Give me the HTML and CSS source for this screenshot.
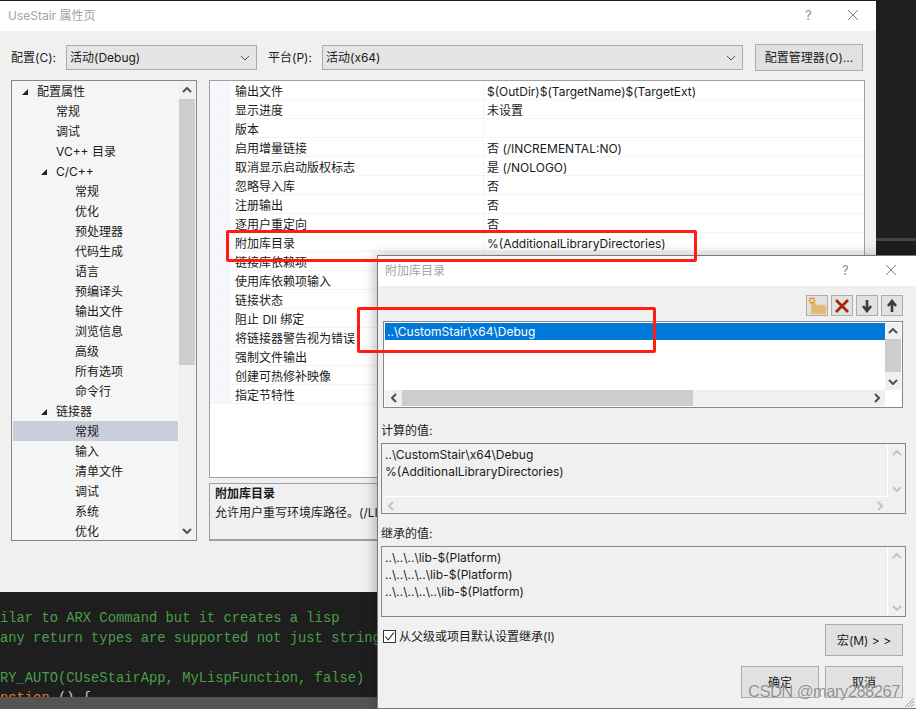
FILE: index.html
```html
<!DOCTYPE html>
<html lang="zh-CN">
<head>
<meta charset="utf-8">
<title>UseStair 属性页</title>
<link rel="stylesheet" href="styles.css">
</head>
<body>
<svg class="defs" aria-hidden="true">
  <symbol id="chev" viewBox="0 0 10 6"><path d="M1 5 L5 1 L9 5" fill="none" stroke="currentColor" stroke-width="2"/></symbol>
  <symbol id="chev-thin" viewBox="0 0 10 6"><path d="M1 1 L5 5 L9 1" fill="none" stroke="currentColor" stroke-width="1"/></symbol>
  <symbol id="close" viewBox="0 0 12 12"><path d="M1 1 L11 11 M11 1 L1 11" fill="none" stroke="currentColor" stroke-width="1"/></symbol>
</svg>
<div class="desktop">
  <div class="editor">
    <div class="editor-band"></div>
    <pre class="code"><span class="cm">ilar to ARX Command but it creates a lisp</span>
<span class="cm">any return types are supported not just strings</span>

<span class="cm">RY_AUTO(CUseStairApp, MyLispFunction, false)</span>
<span class="kw">nction</span> <span class="pl">() {</span></pre>
  </div>
  <div class="statusbar"></div>

  <section class="window main-win">
    <header class="titlebar">
      <span class="title">UseStair 属性页</span>
      <span class="title-tools"><span class="help">?</span><svg class="close"><use href="#close"/></svg></span>
    </header>
    <div class="main-body">
      <div class="config-row">
        <label class="cfg-label">配置(C):</label>
        <div class="combo combo-a"><span>活动(Debug)</span><svg class="chev"><use href="#chev-thin"/></svg></div>
        <label class="cfg-label platform">平台(P):</label>
        <div class="combo combo-b"><span>活动(x64)</span><svg class="chev"><use href="#chev-thin"/></svg></div>
        <button class="btn cfg-btn">配置管理器(O)...</button>
      </div>
      <div class="panes">
        <nav class="tree">
          <ul class="tree-list">
            <li class="l0"><i class="tri"></i>配置属性</li>
            <li class="l1">常规</li>
            <li class="l1">调试</li>
            <li class="l1">VC++ 目录</li>
            <li class="l1"><i class="tri"></i>C/C++</li>
            <li class="l2">常规</li>
            <li class="l2">优化</li>
            <li class="l2">预处理器</li>
            <li class="l2">代码生成</li>
            <li class="l2">语言</li>
            <li class="l2">预编译头</li>
            <li class="l2">输出文件</li>
            <li class="l2">浏览信息</li>
            <li class="l2">高级</li>
            <li class="l2">所有选项</li>
            <li class="l2">命令行</li>
            <li class="l1"><i class="tri"></i>链接器</li>
            <li class="l2 sel">常规</li>
            <li class="l2">输入</li>
            <li class="l2">清单文件</li>
            <li class="l2">调试</li>
            <li class="l2">系统</li>
            <li class="l2">优化</li>
          </ul>
          <div class="vscroll tree-scroll">
            <span class="sb-btn"><svg class="chev"><use href="#chev"/></svg></span>
            <span class="thumb"></span>
            <span class="sb-btn end"><svg class="chev down"><use href="#chev"/></svg></span>
          </div>
        </nav>
        <div class="right-col">
          <div class="prop-grid">
            <div class="prow"><span>输出文件</span><span>$(OutDir)$(TargetName)$(TargetExt)</span></div>
            <div class="prow"><span>显示进度</span><span>未设置</span></div>
            <div class="prow"><span>版本</span><span></span></div>
            <div class="prow"><span>启用增量链接</span><span>否 (/INCREMENTAL:NO)</span></div>
            <div class="prow"><span>取消显示启动版权标志</span><span>是 (/NOLOGO)</span></div>
            <div class="prow"><span>忽略导入库</span><span>否</span></div>
            <div class="prow"><span>注册输出</span><span>否</span></div>
            <div class="prow"><span>逐用户重定向</span><span>否</span></div>
            <div class="prow"><span>附加库目录</span><span>%(AdditionalLibraryDirectories)</span></div>
            <div class="prow"><span>链接库依赖项</span><span></span></div>
            <div class="prow"><span>使用库依赖项输入</span><span></span></div>
            <div class="prow"><span>链接状态</span><span></span></div>
            <div class="prow"><span>阻止 Dll 绑定</span><span></span></div>
            <div class="prow"><span>将链接器警告视为错误</span><span></span></div>
            <div class="prow"><span>强制文件输出</span><span></span></div>
            <div class="prow"><span>创建可热修补映像</span><span></span></div>
            <div class="prow"><span>指定节特性</span><span></span></div>
          </div>
          <div class="desc">
            <strong>附加库目录</strong>
            <p>允许用户重写环境库路径。(/LIBPATH:folder)</p>
          </div>
        </div>
      </div>
    </div>
  </section>

  <section class="window dialog">
    <header class="titlebar">
      <span class="title">附加库目录</span>
      <span class="title-tools"><span class="help">?</span><svg class="close"><use href="#close"/></svg></span>
    </header>
    <div class="dlg-body">
      <div class="toolbar">
        <button class="tool"><svg viewBox="0 0 20 19" width="20" height="19"><path d="M4 7 H9 L10 9 H19 V18 H4 Z" fill="#dfb878" stroke="#e8cf9f" stroke-width="1"/><path d="M5 1 V8 M1.5 4.5 H8.5 M2.5 2 L7.5 7 M7.5 2 L2.5 7" stroke="#d98a1c" stroke-width="1.2"/><circle cx="5" cy="4.5" r="1.5" fill="#f7e9a0"/></svg></button>
        <button class="tool"><svg viewBox="0 0 16 16" width="16" height="16"><path d="M2 2 L14 14 M14 2 L2 14" stroke="#a1260d" stroke-width="2.8" fill="none"/></svg></button>
        <button class="tool"><svg viewBox="0 0 12 14" width="12" height="14"><path d="M6 1 V11 M2 7 L6 12 L10 7" stroke="#3c3c3c" stroke-width="2.6" fill="none"/></svg></button>
        <button class="tool"><svg viewBox="0 0 12 14" width="12" height="14"><path d="M6 13 V3 M2 7 L6 2 L10 7" stroke="#3c3c3c" stroke-width="2.6" fill="none"/></svg></button>
      </div>
      <div class="listbox">
        <div class="list-main">
          <div class="list-sel">..\CustomStair\x64\Debug</div>
        </div>
        <div class="vscroll list-v">
          <span class="sb-btn"><svg class="chev"><use href="#chev"/></svg></span>
          <span class="thumb"></span>
          <span class="sb-btn end"><svg class="chev down"><use href="#chev"/></svg></span>
        </div>
        <div class="hscroll list-h">
          <span class="sb-btn"><svg class="chev left"><use href="#chev"/></svg></span>
          <span class="thumb"></span>
          <span class="sb-btn end"><svg class="chev right"><use href="#chev"/></svg></span>
        </div>
      </div>
      <div class="field-label first">计算的值:</div>
      <div class="ro-box">
        <div class="ro-text">..\CustomStair\x64\Debug<br>%(AdditionalLibraryDirectories)</div>
        <div class="vscroll off">
          <span class="sb-btn"><svg class="chev"><use href="#chev"/></svg></span>
          <span class="sb-btn end"><svg class="chev down"><use href="#chev"/></svg></span>
        </div>
        <div class="hscroll off">
          <span class="sb-btn"><svg class="chev left"><use href="#chev"/></svg></span>
          <span class="sb-btn end"><svg class="chev right"><use href="#chev"/></svg></span>
        </div>
      </div>
      <div class="field-label">继承的值:</div>
      <div class="ro-box inherit">
        <div class="ro-text">..\..\..\lib-$(Platform)<br>..\..\..\..\lib-$(Platform)<br>..\..\..\..\..\lib-$(Platform)</div>
        <div class="vscroll off">
          <span class="sb-btn"><svg class="chev"><use href="#chev"/></svg></span>
          <span class="sb-btn end"><svg class="chev down"><use href="#chev"/></svg></span>
        </div>
      </div>
      <div class="options">
        <label class="check"><span class="box"><svg viewBox="0 0 13 13" width="11" height="11"><path d="M1.5 6.5 L5 10.5 L11.5 2" fill="none" stroke="#333" stroke-width="1.3"/></svg></span>从父级或项目默认设置继承(I)</label>
        <button class="btn dlg-btn">宏(M) &gt; &gt;</button>
      </div>
      <div class="footer">
        <button class="btn dlg-btn">确定</button>
        <button class="btn dlg-btn">取消</button>
      </div>
    </div>
    <svg class="grip" viewBox="0 0 10 10" width="10" height="10"><path d="M9 3 L3 9 M9 6 L6 9 M9 0 L0 9" stroke="#a0a0a0" stroke-width="1"/></svg>
  </section>

  <div class="mark mark-a"></div>
  <div class="mark mark-b"></div>
  <div class="watermark">CSDN @mary288267</div>
</div>
</body>
</html>
```
FILE: styles.css
```css
* { box-sizing: border-box; }
html, body { margin: 0; padding: 0; background: #1e1e1e; }
body {
  width: 916px; height: 709px; overflow: hidden;
  font: 12px/17px "Inter", "Noto Sans CJK SC", sans-serif;
  color: #1a1a1a;
}
.defs { position: absolute; width: 0; height: 0; }
.desktop { position: relative; width: 916px; height: 709px; overflow: hidden; background: #1e1e1e; }

/* editor behind the windows */
.editor { position: absolute; left: 0; top: 0; width: 916px; height: 697px; overflow: hidden; padding-top: 609px; }
.editor-band { position: absolute; left: 876px; right: 0; top: 238px; height: 3px; background: #444; }
.code { margin: 0; font: 13.8px/20px "Liberation Mono", monospace; }
.cm { color: #4a9e48; }
.kw { color: #e6742a; }
.pl { color: #c8c8c8; }
.statusbar { position: absolute; left: 0; right: 0; top: 697px; height: 12px; background: #545454; }

/* windows */
.window { position: absolute; display: flex; flex-direction: column; background: #f0f0f0; }
.main-win { left: 0; top: 1px; width: 876px; height: 591px; }
.titlebar { flex: none; display: flex; justify-content: space-between; align-items: center; height: 30px; background: #fff; padding: 0 17px 2px 8px; }
.title { color: #a3a3a3; font-size: 12px; }
.title-tools { display: flex; align-items: center; gap: 34px; color: #8c8c8c; }
.help { font-size: 13px; width: 8px; }
.close { width: 12px; height: 12px; color: #808080; }

.main-body { flex: 1; padding: 13px 11px 0 11px; }
.config-row { display: flex; align-items: center; height: 27px; }
.cfg-label { width: 55px; }
.cfg-label.platform { margin-left: 11px; width: 54px; }
.combo { display: flex; justify-content: space-between; align-items: center; height: 25px; background: #e5e5e5; border: 1px solid #acacac; padding: 0 6px 0 3px; }
.combo-a { width: 191px; }
.combo-b { width: 421px; }
.btn { font: inherit; color: inherit; background: #e1e1e1; border: 1px solid #adadad; padding: 0; }
.cfg-btn { width: 108px; height: 27px; margin-left: 12px; }

.panes { display: flex; gap: 12px; margin-top: 9px; height: 461px; }
.tree { flex: none; width: 186px; display: flex; background: #f5f5f5; border: 1px solid #828790; padding-left: 1px; overflow: hidden; }
.tree-list { flex: 1; list-style: none; margin: 0; padding: 0; }
.tree-list li { position: relative; height: 20px; line-height: 22px; white-space: nowrap; }
.l0 { padding-left: 24px; }
.l1 { padding-left: 43px; }
.l2 { padding-left: 62px; }
.sel { background: #cacdda; }
.tri { position: absolute; top: 8px; width: 0; height: 0; border-style: solid; border-width: 0 0 6px 6px; border-color: transparent transparent #222 transparent; }
.l0 .tri { left: 9px; }
.l1 .tri { left: 28px; }

.vscroll { flex: none; display: flex; flex-direction: column; width: 16px; background: #f0f0f0; }
.hscroll { display: flex; height: 16px; background: #f0f0f0; }
.sb-btn { flex: none; display: flex; align-items: center; justify-content: center; width: 16px; height: 16px; }
.sb-btn.end { margin-top: auto; }
.hscroll .sb-btn { width: 17px; }
.hscroll .sb-btn.end { margin-top: 0; margin-left: auto; }
.thumb { display: block; background: #cdcdcd; }
.tree-scroll { margin-right: 1px; margin-left: 1px; }
.tree-scroll .sb-btn { height: 18px; }
.tree-scroll .thumb { height: 266px; }
.chev { width: 10px; height: 6px; color: #505050; display: block; }
.chev.down { transform: rotate(180deg); }
.chev.left { transform: rotate(-90deg); }
.chev.right { transform: rotate(90deg); }
.off .chev { color: #c4c4c4; }

.right-col { flex: 1; display: flex; flex-direction: column; gap: 5px; min-width: 0; }
.prop-grid { height: 398px; background: #fff; border: 1px solid #a0a0a0; }
.prow { display: grid; grid-template-columns: 252px 1fr; grid-template-rows: 18px; height: 19px; line-height: 22px; padding-left: 21px; background: linear-gradient(90deg, #f5f7fb 21px, #fff 21px); border-bottom: 1px solid #f1f4f9; }
.prow span { padding-left: 4px; white-space: nowrap; }
.prow span + span { padding-left: 3px; border-left: 1px solid #f1f4f9; }
.desc { flex: 1; background: #f0f0f0; border: 1px solid #a0a0a0; border-bottom-width: 2px; padding: 1px 5px; }
.desc strong { display: block; line-height: 18px; font-weight: 700; }
.desc p { margin: 1px 0 0; line-height: 18px; white-space: nowrap; }

/* dialog */
.dialog { left: 377px; top: 255px; width: 539px; height: 454px; border: 1px solid #7a7a7a; border-right: 0; box-shadow: -2px 0 12px rgba(0,0,0,.28); }
.dialog .titlebar { padding: 0 19px 2px 7px; }
.dialog .title-tools { gap: 35px; }
.dlg-body { flex: 1; padding: 0 10px 0 3px; }
.toolbar { display: flex; justify-content: flex-end; gap: 3px; margin: 9px 3px 0 0; }
.tool { display: flex; align-items: center; justify-content: center; width: 22px; height: 21px; padding: 0; background: #e1e1e1; border: 1px solid #adadad; }
.listbox { display: grid; grid-template-columns: 1fr 16px; grid-template-rows: 1fr 16px; height: 87px; margin: 5px 3px 0 2px; padding: 1px; background: #fff; border: 1px solid #828790; }
.list-main { background: #fff; }
.list-sel { height: 17px; line-height: 17px; padding-left: 2px; background: #0078d7; color: #fff; }
.list-v { width: 16px; }
.list-v .thumb { height: 33px; }
.list-h .thumb { width: 291px; }
.field-label { height: 16px; line-height: 16px; margin-top: 11px; padding-top: 1px; }
.field-label.first { margin-top: 14px; }
.ro-box { display: grid; grid-template-columns: 1fr 17px; grid-template-rows: 53px 16px; height: 71px; margin-top: 5px; background: #f0f0f0; border: 1px solid #828790; }
.ro-box.inherit { grid-template-rows: 1fr; }
.ro-text { padding: 2px 0 0 3px; border-right: 1px solid #fff; border-bottom: 1px solid #fff; }
.inherit .ro-text { border-bottom: 0; }
.ro-box .vscroll { width: 17px; }
.ro-box .sb-btn { width: 17px; height: 17px; }
.ro-box .hscroll { grid-column: 1; }
.options { display: flex; justify-content: space-between; margin: 7px 3px 0 2px; }
.check { display: flex; align-items: center; gap: 3px; height: 14px; margin-top: 5px; }
.box { display: flex; align-items: center; justify-content: center; width: 13px; height: 13px; background: #fff; border: 1px solid #333; }
.dlg-btn { width: 78px; height: 32px; }
.footer { display: flex; justify-content: flex-end; gap: 6px; margin: 10px 3px 0 0; }
.grip { position: absolute; right: 1px; bottom: 0; }

/* annotations */
.mark { position: absolute; border: 3px solid #ff1c10; border-radius: 2px; pointer-events: none; }
.mark-a { left: 226px; top: 230px; width: 471px; height: 32px; }
.mark-b { left: 357px; top: 307px; width: 299px; height: 46px; }
.watermark { position: absolute; left: 748px; top: 681px; font: 16.5px/20px "Liberation Sans", sans-serif; letter-spacing: -.5px; color: rgba(110,110,110,.75); text-shadow: 0 0 1px rgba(255,255,255,.7); white-space: nowrap; }
```
